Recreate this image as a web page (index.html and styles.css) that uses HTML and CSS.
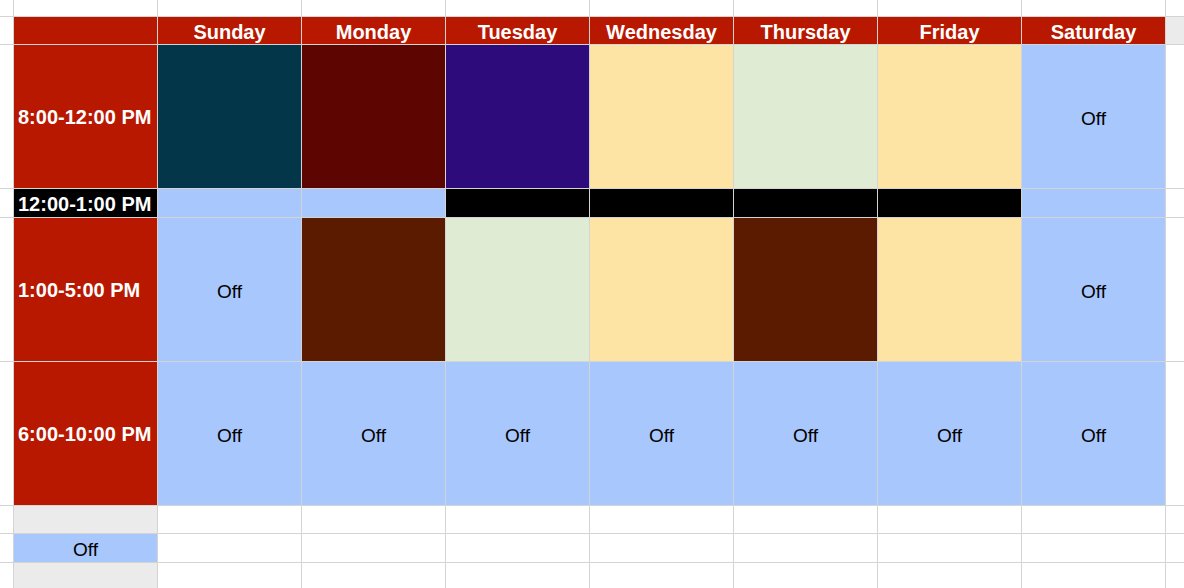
FILE: index.html
```html
<!DOCTYPE html>
<html>
<head>
<meta charset="utf-8">
<title>Schedule</title>
<link rel="stylesheet" href="styles.css">
</head>
<body>
<div class="sheet">
  <!-- row 1 -->
  <div class="c"></div><div class="c"></div><div class="c"></div><div class="c"></div><div class="c"></div>
  <div class="c"></div><div class="c"></div><div class="c"></div><div class="c"></div><div class="c"></div>
  <!-- row 2: header -->
  <div class="c"></div>
  <div class="c red"></div>
  <div class="c red head">Sunday</div>
  <div class="c red head">Monday</div>
  <div class="c red head">Tuesday</div>
  <div class="c red head">Wednesday</div>
  <div class="c red head">Thursday</div>
  <div class="c red head">Friday</div>
  <div class="c red head">Saturday</div>
  <div class="c gray"></div>
  <!-- row 3 -->
  <div class="c"></div>
  <div class="c red label">8:00-12:00 PM</div>
  <div class="c teal"></div>
  <div class="c maroon"></div>
  <div class="c purple"></div>
  <div class="c yellow"></div>
  <div class="c green"></div>
  <div class="c yellow"></div>
  <div class="c blue off">Off</div>
  <div class="c"></div>
  <!-- row 4 -->
  <div class="c"></div>
  <div class="c black label">12:00-1:00 PM</div>
  <div class="c blue"></div>
  <div class="c blue"></div>
  <div class="c black"></div>
  <div class="c black"></div>
  <div class="c black"></div>
  <div class="c black"></div>
  <div class="c blue"></div>
  <div class="c"></div>
  <!-- row 5 -->
  <div class="c"></div>
  <div class="c red label">1:00-5:00 PM</div>
  <div class="c blue off">Off</div>
  <div class="c brown"></div>
  <div class="c green"></div>
  <div class="c yellow"></div>
  <div class="c brown"></div>
  <div class="c yellow"></div>
  <div class="c blue off">Off</div>
  <div class="c"></div>
  <!-- row 6 -->
  <div class="c"></div>
  <div class="c red label">6:00-10:00 PM</div>
  <div class="c blue off">Off</div>
  <div class="c blue off">Off</div>
  <div class="c blue off">Off</div>
  <div class="c blue off">Off</div>
  <div class="c blue off">Off</div>
  <div class="c blue off">Off</div>
  <div class="c blue off">Off</div>
  <div class="c"></div>
  <!-- row 7 -->
  <div class="c"></div>
  <div class="c gray"></div>
  <div class="c"></div><div class="c"></div><div class="c"></div><div class="c"></div>
  <div class="c"></div><div class="c"></div><div class="c"></div><div class="c"></div>
  <!-- row 8 -->
  <div class="c"></div>
  <div class="c blue off">Off</div>
  <div class="c"></div><div class="c"></div><div class="c"></div><div class="c"></div>
  <div class="c"></div><div class="c"></div><div class="c"></div><div class="c"></div>
  <!-- row 9 -->
  <div class="c"></div>
  <div class="c gray"></div>
  <div class="c"></div><div class="c"></div><div class="c"></div><div class="c"></div>
  <div class="c"></div><div class="c"></div><div class="c"></div><div class="c"></div>
</div>
</body>
</html>
```
FILE: styles.css
```css
html, body {
  margin: 0;
  padding: 0;
  background: #ffffff;
  overflow: hidden;
}

.sheet {
  display: grid;
  grid-template-columns: 13px repeat(8, 143px) 1fr;
  grid-template-rows: 16px 27px 143px 28px 143px 143px 27px 28px 40px;
  gap: 1px;
  background: #d4d4d4;
  width: 1184px;
  height: 588px;
  overflow: hidden;
  font-family: "Liberation Sans", Arial, Helvetica, sans-serif;
}

.c {
  background: #ffffff;
  display: flex;
  align-items: center;
  justify-content: center;
  overflow: hidden;
  white-space: nowrap;
}

.head {
  color: #ffffff;
  font-weight: bold;
  font-size: 20px;
  padding-top: 3px;
}

.label {
  color: #ffffff;
  font-weight: bold;
  font-size: 20px;
  justify-content: flex-start;
  padding-left: 4px;
  padding-top: 2px;
}

.off {
  color: #000000;
  font-size: 19px;
  padding-top: 4px;
}

.red { background: #b81800; }
.black { background: #000000; }
.gray { background: #ebebeb; }
.teal { background: #023648; }
.maroon { background: #5d0500; }
.purple { background: #2d0b7a; }
.yellow { background: #fee4a4; }
.green { background: #e0ebd4; }
.blue { background: #a8c7fd; }
.brown { background: #5b1b00; }
```
